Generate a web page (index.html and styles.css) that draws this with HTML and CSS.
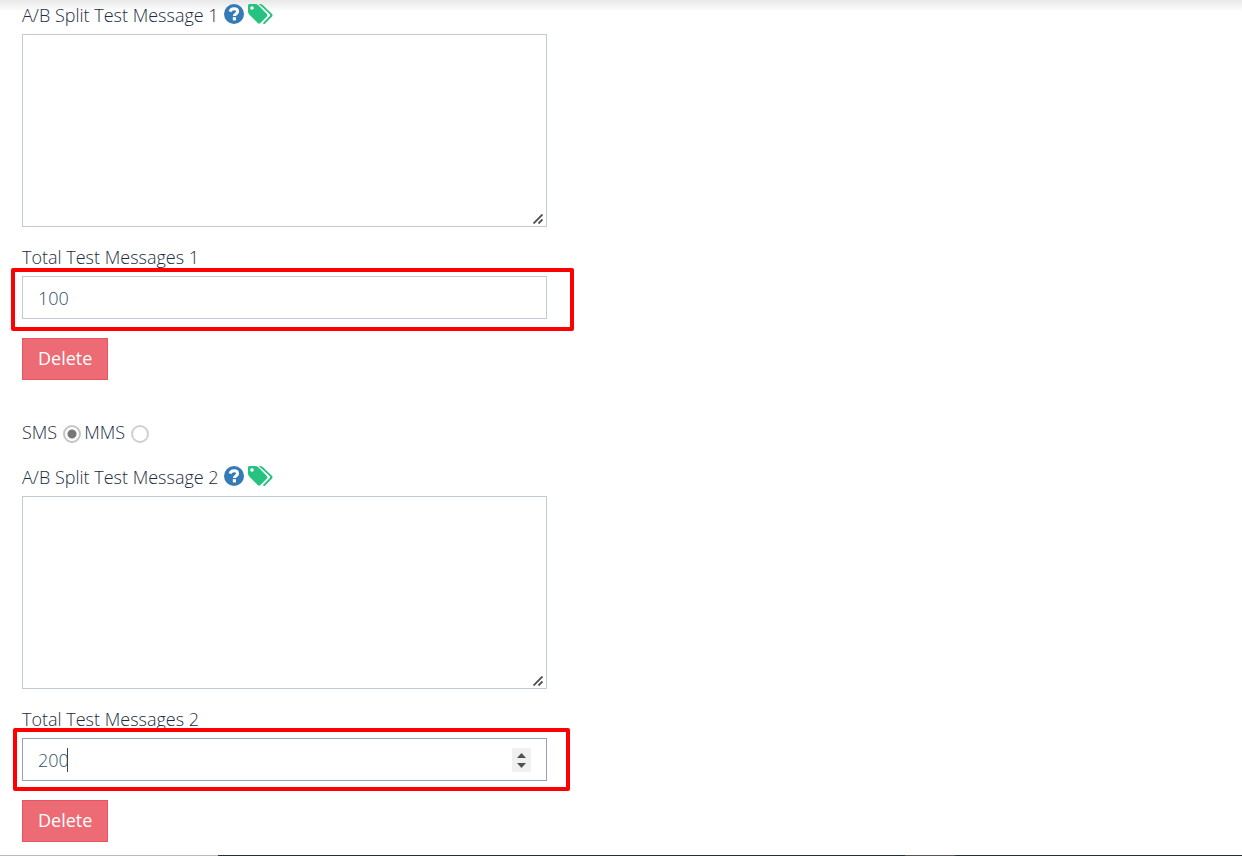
FILE: index.html
```html
<!DOCTYPE html>
<html lang="en">
<head>
    <meta charset="UTF-8">
    <meta name="viewport" content="width=device-width, initial-scale=1.0">
    <title>A/B Split Test</title>
    <link rel="stylesheet" href="styles.css">
</head>
<body>
    <svg class="sprite" aria-hidden="true">
        <symbol id="icon-help" viewBox="0 0 20 20">
            <circle cx="10" cy="10" r="10" fill="#337ab7"/>
            <path d="M6.2 7.600C6.700 5.300 8.200 4.700 10 4.700c2.100 0 3.600 1 3.600 2.800 0 2.500-3.200 2.300-3.200 4.600" fill="none" stroke="#fff" stroke-width="3"/>
            <rect x="8.800" y="13.200" width="3.200" height="3.200" fill="#fff"/>
        </symbol>
        <symbol id="icon-tags" viewBox="0 0 25 20">
            <path d="M0 1.600C0 .7.7 0 1.600 0h5.800c.9 0 2 .5 2.700 1.100l8.800 9c.6.700.6 1.600 0 2.300l-6.700 6.900c-.6.600-1.600.6-2.200 0l-9-9.100C.6 9.700 0 8.500 0 7.600zM4 2.200a1.800 1.800 0 1 0 0 3.600 1.800 1.800 0 0 0 0-3.600z" fill="#26c281" fill-rule="evenodd"/>
            <path d="M10.800 0h1.300c.9 0 2 .5 2.700 1.100l9.300 9c.6.700.6 1.600 0 2.300l-6.900 7c-.8.800-1.600.7-2.400-.1l6.800-7c.7-.7.7-1.500 0-2.200z" fill="#26c281"/>
        </symbol>
        <symbol id="icon-resize" viewBox="0 0 10 10">
            <path d="M.5 9.500l9-9M5.500 9.500l4-4" fill="none" stroke="#505050" stroke-width="1.900"/>
        </symbol>
    </svg>

    <form class="split-form">
        <section class="variant">
            <div class="field">
                <div class="label-row">
                    <label for="message1">A/B Split Test Message 1</label>
                    <svg class="icon-help"><use href="#icon-help"/></svg>
                    <svg class="icon-tags"><use href="#icon-tags"/></svg>
                </div>
                <div class="text-box">
                    <textarea id="message1"></textarea>
                    <svg class="icon-resize"><use href="#icon-resize"/></svg>
                </div>
            </div>

            <div class="field">
                <div class="label-row">
                    <label for="total1">Total Test Messages 1</label>
                </div>
                <div class="number-box">
                    <input type="number" id="total1" value="100">
                    <span class="highlight highlight-first"></span>
                </div>
            </div>

            <button type="button" class="btn-delete">Delete</button>
        </section>

        <section class="variant">
            <div class="type-row">
                <label for="sms">SMS</label>
                <input type="radio" id="sms" name="type" checked>
                <label for="mms">MMS</label>
                <input type="radio" id="mms" name="type">
            </div>

            <div class="field">
                <div class="label-row">
                    <label for="message2">A/B Split Test Message 2</label>
                    <svg class="icon-help"><use href="#icon-help"/></svg>
                    <svg class="icon-tags"><use href="#icon-tags"/></svg>
                </div>
                <div class="text-box">
                    <textarea id="message2"></textarea>
                    <svg class="icon-resize"><use href="#icon-resize"/></svg>
                </div>
            </div>

            <div class="field">
                <div class="label-row">
                    <label for="total2">Total Test Messages 2</label>
                </div>
                <div class="number-box">
                    <input type="number" id="total2" class="active" value="200">
                    <span class="caret"></span>
                    <span class="spinner">
                        <button type="button" aria-label="Increase"><svg viewBox="0 0 9 5"><path d="M0 5 4.500 0 9 5z"/></svg></button>
                        <button type="button" aria-label="Decrease"><svg viewBox="0 0 9 5"><path d="M0 0 4.500 5 9 0z"/></svg></button>
                    </span>
                    <span class="highlight highlight-second"></span>
                </div>
            </div>

            <button type="button" class="btn-delete">Delete</button>
        </section>
    </form>

    <footer class="bottom-bar"></footer>
</body>
</html>
```
FILE: styles.css
```css
* {
    margin: 0;
    padding: 0;
    box-sizing: border-box;
}

body {
    background: linear-gradient(#e8e8e8, #fff 12px) no-repeat #fff;
    color: #1c2c42;
    font-family: 'Open Sans', sans-serif;
    font-size: 18px;
    font-weight: 300;
    line-height: 26px;
}

.sprite {
    position: absolute;
    width: 0;
    height: 0;
}

.split-form {
    display: flex;
    flex-direction: column;
    gap: 40px;
    max-width: 569px;
    padding: 2px 22px 13px;
}

.field {
    margin-bottom: 17px;
}

.label-row {
    display: flex;
    align-items: center;
    height: 26px;
    margin-bottom: 6px;
}

.icon-help {
    width: 20px;
    height: 20px;
    margin: 0 4px 2px 5px;
}

.icon-tags {
    width: 25px;
    height: 20px;
    margin-bottom: 2px;
}

textarea,
input[type="number"] {
    display: block;
    width: 100%;
    border: 1px solid #c2cad8;
    background-color: #fff;
    color: #2f4d6c;
    font: inherit;
    padding: 6px 15px;
    outline: none;
}

textarea {
    height: 193px;
    resize: none;
}

input[type="number"] {
    height: 43px;
    appearance: textfield;
}

input[type="number"].active {
    border-color: #93a1bb;
}

.text-box {
    position: relative;
}

.icon-resize {
    position: absolute;
    right: 4px;
    bottom: 3px;
    width: 10px;
    height: 10px;
}

.number-box {
    position: relative;
    margin-bottom: 19px;
}

.caret {
    position: absolute;
    top: 10px;
    left: 45px;
    width: 1px;
    height: 24px;
    background-color: #34495e;
}

.spinner {
    position: absolute;
    top: 10px;
    right: 16px;
    display: flex;
    flex-direction: column;
    width: 19px;
    height: 24px;
    background-color: #f0f0f0;
}

.spinner button {
    display: flex;
    flex: 1;
    align-items: flex-end;
    justify-content: center;
    border: none;
    background: none;
    padding: 3px 0 2px;
}

.spinner button:last-child {
    align-items: flex-start;
}

.spinner svg {
    width: 9px;
    height: 5px;
    fill: #505050;
}

/* red outline around the total fields */
.highlight {
    position: absolute;
    border: 4px solid #f00;
    border-radius: 2px;
    pointer-events: none;
}

.highlight-first {
    inset: -8px -27px -12px -11px;
}

.highlight-second {
    inset: -10px -23px -10px -9px;
}

.btn-delete {
    display: block;
    height: 42px;
    padding: 0 15px 2px;
    border: 1px solid #ea5460;
    background-color: #ed6b75;
    color: #fff;
    font: inherit;
    font-weight: 400;
    cursor: pointer;
}

.type-row {
    display: flex;
    align-items: center;
    height: 26px;
    margin-bottom: 18px;
}

.type-row label {
    padding-bottom: 2px;
}

.type-row input {
    appearance: none;
    width: 18px;
    height: 18px;
    margin: 2px 3px 0 6px;
    border: 2px solid #d0d0d0;
    border-radius: 50%;
    background-color: #fff;
}

.type-row input:checked {
    border-color: #c4c4c4;
    background: radial-gradient(circle, #777 4px, #fff 5px);
}

.bottom-bar {
    height: 1px;
    background: linear-gradient(to right, #bbb 218px, #22303a 218px 905px, #555 905px 955px, #22303a 955px);
}
```
